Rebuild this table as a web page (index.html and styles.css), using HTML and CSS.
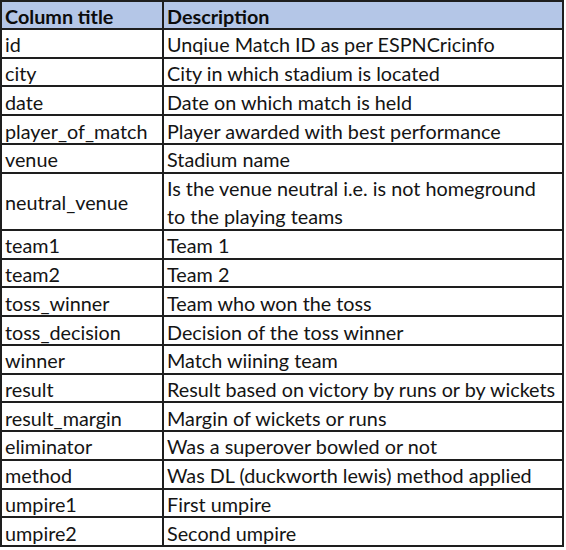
FILE: index.html
```html
<!DOCTYPE html>
<html lang="en">
<head>
<meta charset="utf-8">
<title>Columns</title>
<link rel="stylesheet" href="styles.css">
</head>
<body>
<div class="sheet">
  <div class="cell head">Column title</div>
  <div class="cell head">Description</div>
  <div class="cell">id</div><div class="cell">Unqiue Match ID as per ESPNCricinfo</div>
  <div class="cell">city</div><div class="cell">City in which stadium is located</div>
  <div class="cell">date</div><div class="cell">Date on which match is held</div>
  <div class="cell">player_of_match</div><div class="cell">Player awarded with best performance</div>
  <div class="cell">venue</div><div class="cell">Stadium name</div>
  <div class="cell tall">neutral_venue</div><div class="cell tall multi">Is the venue neutral i.e. is not homeground<br>to the playing teams</div>
  <div class="cell">team1</div><div class="cell">Team 1</div>
  <div class="cell">team2</div><div class="cell">Team 2</div>
  <div class="cell">toss_winner</div><div class="cell">Team who won the toss</div>
  <div class="cell">toss_decision</div><div class="cell">Decision of the toss winner</div>
  <div class="cell">winner</div><div class="cell">Match wiining team</div>
  <div class="cell">result</div><div class="cell">Result based on victory by runs or by wickets</div>
  <div class="cell">result_margin</div><div class="cell">Margin of wickets or runs</div>
  <div class="cell">eliminator</div><div class="cell">Was a superover bowled or not</div>
  <div class="cell">method</div><div class="cell">Was DL (duckworth lewis) method applied</div>
  <div class="cell">umpire1</div><div class="cell">First umpire</div>
  <div class="cell">umpire2</div><div class="cell">Second umpire</div>
</div>
</body>
</html>
```
FILE: styles.css
```css
html, body {
  margin: 0;
  padding: 0;
  background: #ffffff;
}
.sheet {
  width: 564px;
  box-sizing: border-box;
  display: grid;
  grid-template-columns: 162px 400px;
  grid-auto-rows: 28.72px;
  grid-template-rows: 28px;
  border-left: 2px solid #1e1e1e;
  border-top: 2px solid #1e1e1e;
  font-family: Lato, "Open Sans", sans-serif;
  font-size: 19.8px;
  color: #141414;
}
.cell {
  box-sizing: border-box;
  border-right: 2px solid #1e1e1e;
  border-bottom: 2px solid #1e1e1e;
  padding: 2px 0 0 3px;
  display: flex;
  align-items: center;
  white-space: nowrap;
  overflow: hidden;
}
.head {
  background: #b4c6e7;
  font-weight: bold;
  color: #0c0c0c;
}
.tall {
  grid-row: span 2;
}
.multi {
  line-height: 28.7px;
}
```
